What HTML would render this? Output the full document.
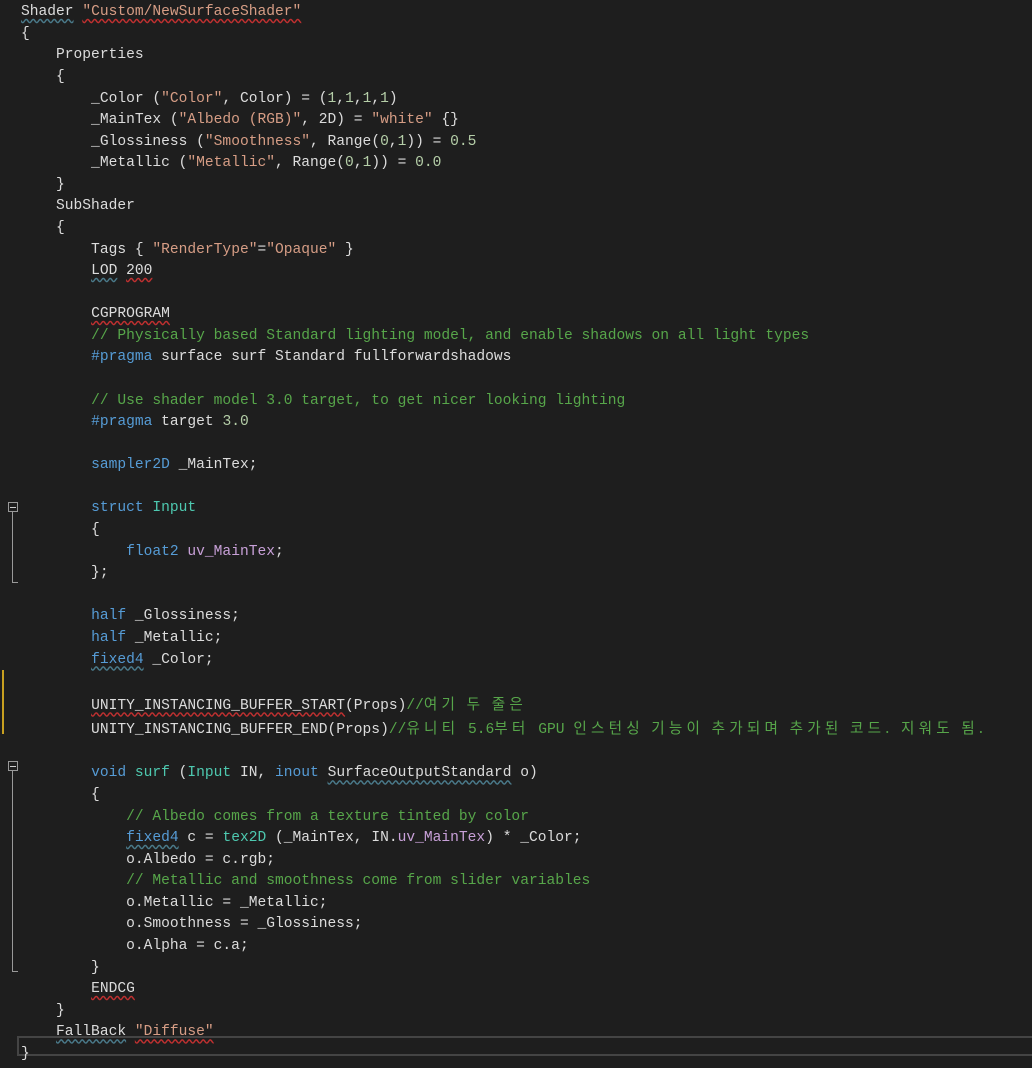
<!DOCTYPE html>
<html><head><meta charset="utf-8">
<style>
html,body{margin:0;padding:0;background:#1e1e1e;width:1032px;height:1068px;overflow:hidden}
#c{position:absolute;left:21px;top:2.2px;font-family:"Liberation Mono","Noto Sans CJK KR",monospace;font-size:14.6px;line-height:21.58px;color:#dcdcdc;white-space:pre}
.k{color:#569cd6}.s{color:#d69d85}.c{color:#57a64a}.n{color:#b5cea8}.t{color:#4ec9b0}.y{color:#e8e8b0}.p{color:#c8a0d8}
.kr{font-family:"Noto Sans CJK KR",sans-serif;letter-spacing:4.2px}
.w{text-decoration:underline wavy #4a7a8a;text-underline-offset:3px}
.r{text-decoration:underline wavy #c03030;text-underline-offset:3px}
.box{position:absolute;border:1px solid #999;width:8px;height:8px;left:8px}
.box:after{content:"";position:absolute;left:1px;top:3.5px;width:6px;height:1px;background:#ccc}
.vl{position:absolute;left:12px;width:1px;background:#999}
.hl{position:absolute;left:12px;width:6px;height:1px;background:#999}
</style></head><body>
<div class="box" style="top:502px"></div><div class="vl" style="top:512px;height:70px"></div><div class="hl" style="top:582px"></div>
<div class="box" style="top:761px"></div><div class="vl" style="top:771px;height:200px"></div><div class="hl" style="top:971px"></div>
<div style="position:absolute;left:2px;top:670px;width:2px;height:64px;background:#c8a020"></div>
<div style="position:absolute;left:17px;top:1036px;width:1020px;height:20px;border:2px solid #444;box-sizing:border-box"></div>
<div id="c"><span class="w">Shader</span> <span class="s r">"Custom/NewSurfaceShader"</span>
{
    Properties
    {
        _Color (<span class="s">"Color"</span>, Color) = (<span class="n">1</span>,<span class="n">1</span>,<span class="n">1</span>,<span class="n">1</span>)
        _MainTex (<span class="s">"Albedo (RGB)"</span>, 2D) = <span class="s">"white"</span> {}
        _Glossiness (<span class="s">"Smoothness"</span>, Range(<span class="n">0</span>,<span class="n">1</span>)) = <span class="n">0.5</span>
        _Metallic (<span class="s">"Metallic"</span>, Range(<span class="n">0</span>,<span class="n">1</span>)) = <span class="n">0.0</span>
    }
    SubShader
    {
        Tags { <span class="s">"RenderType"</span>=<span class="s">"Opaque"</span> }
        <span class="w">LOD</span> <span class="r">200</span>

        <span class="r">CGPROGRAM</span>
        <span class="c">// Physically based Standard lighting model, and enable shadows on all light types</span>
        <span class="k">#pragma</span> surface surf Standard fullforwardshadows

        <span class="c">// Use shader model 3.0 target, to get nicer looking lighting</span>
        <span class="k">#pragma</span> target <span class="n">3.0</span>

        <span class="k">sampler2D</span> _MainTex;

        <span class="k">struct</span> <span class="t">Input</span>
        {
            <span class="k">float2</span> <span class="p">uv_MainTex</span>;
        };

        <span class="k">half</span> _Glossiness;
        <span class="k">half</span> _Metallic;
        <span class="k w">fixed4</span> _Color;

        <span class="r">UNITY_INSTANCING_BUFFER_START</span>(Props)<span class="c">//<span class="kr">여기 두 줄은</span></span>
        UNITY_INSTANCING_BUFFER_END(Props)<span class="c">//<span class="kr">유니티</span> 5.6<span class="kr">부터</span> GPU <span class="kr">인스턴싱 기능이 추가되며 추가된 코드. 지워도 됨.</span></span>

        <span class="k">void</span> <span class="t">surf</span> (<span class="t">Input</span> IN, <span class="k">inout</span> <span class="w">SurfaceOutputStandard</span> o)
        {
            <span class="c">// Albedo comes from a texture tinted by color</span>
            <span class="k w">fixed4</span> c = <span class="t">tex2D</span> (_MainTex, IN.<span class="p">uv_MainTex</span>) * _Color;
            o.Albedo = c.rgb;
            <span class="c">// Metallic and smoothness come from slider variables</span>
            o.Metallic = _Metallic;
            o.Smoothness = _Glossiness;
            o.Alpha = c.a;
        }
        <span class="r">ENDCG</span>
    }
    <span class="w">FallBack</span> <span class="s r">"Diffuse"</span>
}</div>
</body></html>
